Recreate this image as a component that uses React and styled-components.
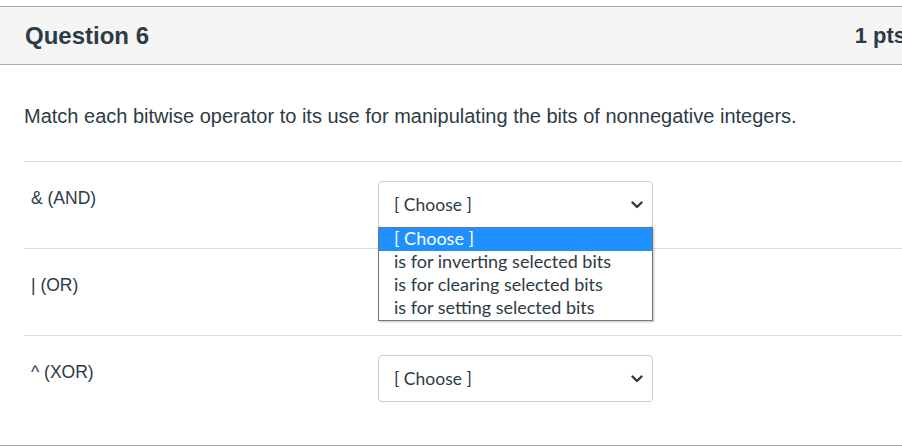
import React from "react";
import styled, { createGlobalStyle } from "styled-components";

const GlobalStyle = createGlobalStyle`
  body {
    margin: 0;
    background: #fff;
    overflow: hidden;
    font-family: "Liberation Sans", Arial, sans-serif;
    color: #2d3b45;
  }
`;

const rows = [
  { label: "& (AND)", open: true },
  { label: "| (OR)", hidden: true },
  { label: "^ (XOR)" },
];

const options = [
  "[ Choose ]",
  "is for inverting selected bits",
  "is for clearing selected bits",
  "is for setting selected bits",
];

const Chevron = () => (
  <svg width="12" height="8" viewBox="0 0 12 8">
    <polyline
      points="1.5,1.5 6,6 10.5,1.5"
      fill="none"
      stroke="#2d3b45"
      strokeWidth="2.4"
      strokeLinecap="round"
      strokeLinejoin="round"
    />
  </svg>
);

const App = () => {
  return (
    <>
      <GlobalStyle />
      <Question>
        <Header>
          <Title>Question 6</Title>
          <Points>1 pts</Points>
        </Header>
        <Body>
          <Prompt>
            Match each bitwise operator to its use for manipulating the bits of
            nonnegative integers.
          </Prompt>
          {rows.map((row) => (
            <Row key={row.label}>
              <Label>{row.label}</Label>
              <SelectWrap>
                {!row.hidden && (
                  <Select>
                    <span>[ Choose ]</span>
                    <Chevron />
                  </Select>
                )}
                {row.open && (
                  <OptionList>
                    {options.map((opt, i) => (
                      <Option key={opt} active={i === 0}>
                        {opt}
                      </Option>
                    ))}
                  </OptionList>
                )}
              </SelectWrap>
            </Row>
          ))}
        </Body>
      </Question>
    </>
  );
};

const Question = styled.div`
  margin-top: 6px;
  width: 912px;
  border-top: 1px solid #aaaaaa;
  border-bottom: 1px solid #aaaaaa;
`;

const Header = styled.div`
  height: 57px;
  background: #f5f5f5;
  border-bottom: 1px solid #aaaaaa;
  display: flex;
  align-items: center;
  justify-content: space-between;
  padding: 0 6px 0 25px;
`;

const Title = styled.h2`
  margin: 0;
  font-size: 24px;
  font-weight: bold;
  color: #2d3b45;
`;

const Points = styled.div`
  font-size: 22px;
  font-weight: bold;
  color: #2d3b45;
`;

const Body = styled.div`
  padding: 36px 0 23px 24px;
`;

const Prompt = styled.p`
  margin: 0 0 30px 0;
  font-size: 20px;
  line-height: 30px;
`;

const Row = styled.div`
  display: flex;
  border-top: 1px solid #dddddd;
  padding: 19px 0 20px 0;
`;

const Label = styled.div`
  width: 347px;
  padding-left: 7px;
  padding-top: 6px;
  font-size: 17.5px;
  line-height: 22px;
`;

const SelectWrap = styled.div`
  position: relative;
  width: 275px;
  height: 47px;
`;

const Select = styled.div`
  box-sizing: border-box;
  height: 47px;
  border: 1px solid #c7cdd1;
  border-radius: 4px;
  background: #fff;
  display: flex;
  align-items: center;
  justify-content: space-between;
  padding: 0 9px 0 15px;
  font-family: Lato, "Open Sans", sans-serif;
  font-size: 17.5px;
  color: #2d3b45;
`;

const OptionList = styled.div`
  position: absolute;
  top: 46px;
  left: 0;
  width: 275px;
  box-sizing: border-box;
  border: 1px solid #767676;
  background: #fff;
  box-shadow: 1px 1px 2px rgba(0, 0, 0, 0.25);
  z-index: 2;
`;

const Option = styled.div`
  height: 23px;
  line-height: 21px;
  padding-left: 15px;
  font-family: Lato, "Open Sans", sans-serif;
  font-size: 18px;
  color: ${(p) => (p.active ? "#fff" : "#2d3b45")};
  background: ${(p) => (p.active ? "#1e90ff" : "#fff")};
`;

export default App;
